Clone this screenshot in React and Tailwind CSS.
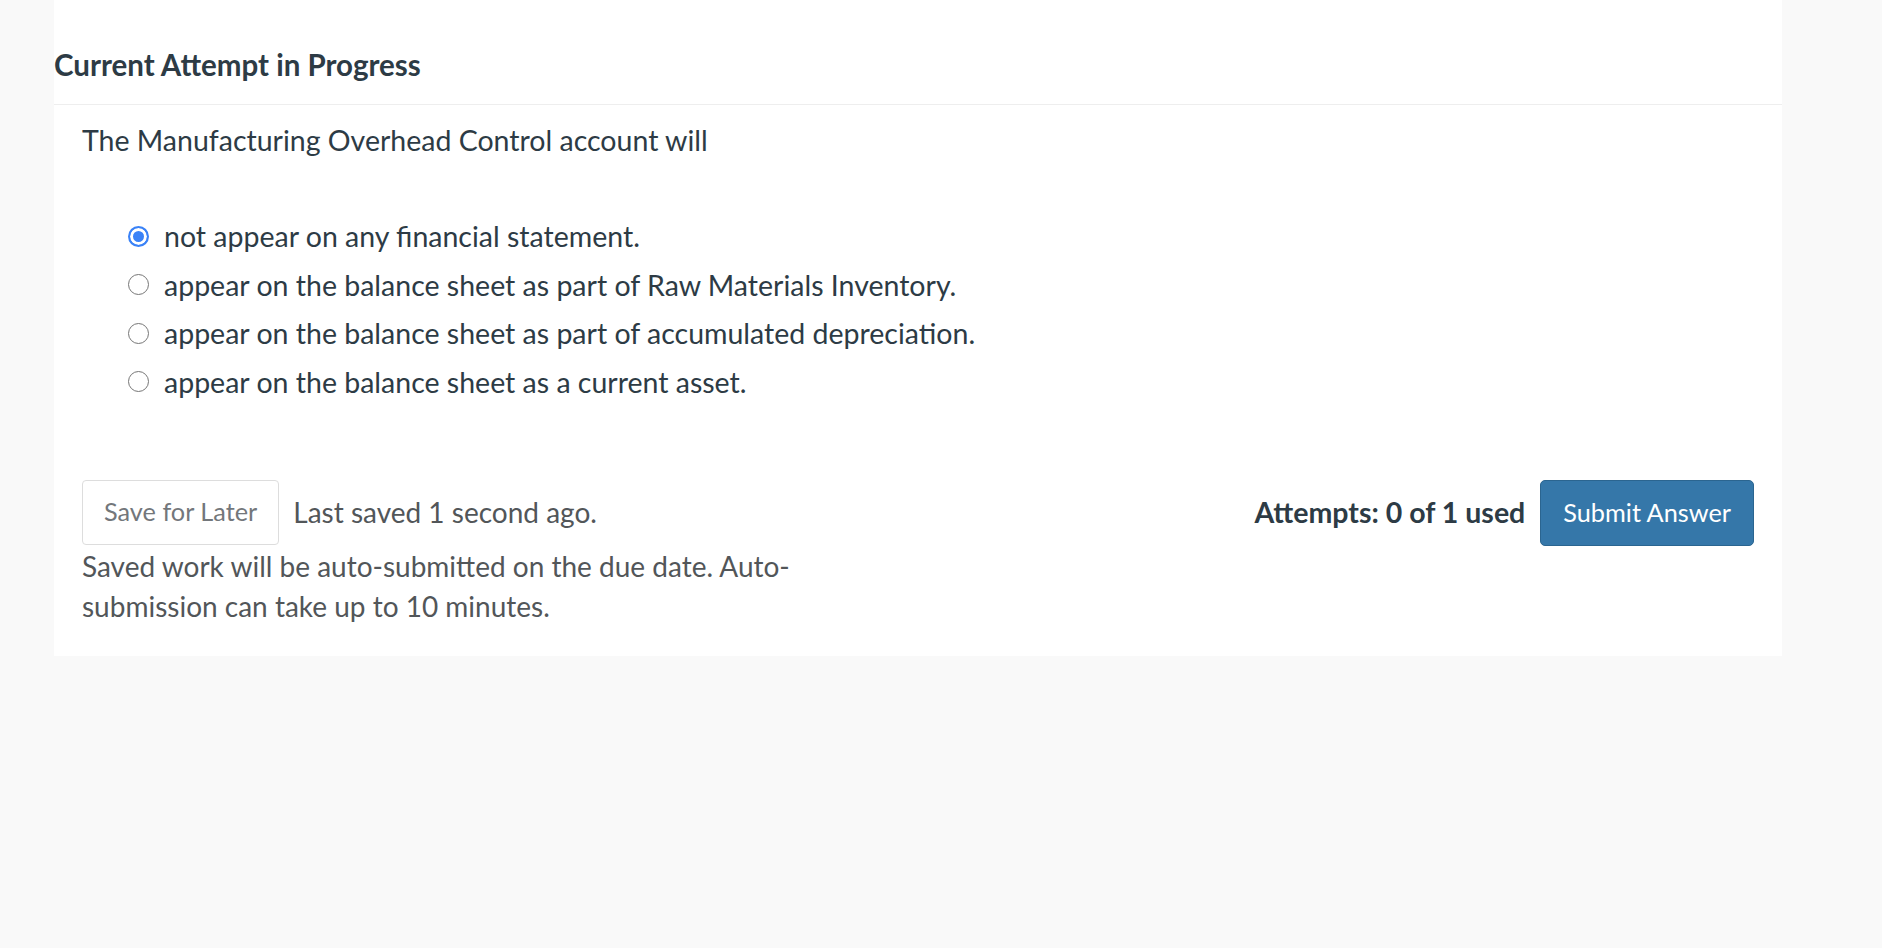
import { useState } from 'react';

const options = [
  'not appear on any financial statement.',
  'appear on the balance sheet as part of Raw Materials Inventory.',
  'appear on the balance sheet as part of accumulated depreciation.',
  'appear on the balance sheet as a current asset.',
];

export default function App() {
  const [picked, setPicked] = useState(0);

  return (
    <div className="min-h-[948px] bg-[#f9f9f9] pl-[54px] pr-[100px] text-[#2d3b45]" style={{ fontFamily: 'Lato, "Open Sans", sans-serif' }}>
      <div className="bg-white">
        <div className="h-[105px] pt-[46px] border-b border-[#eeeeee]">
          <h2 className="text-[29.5px] font-bold leading-[38px]">Current Attempt in Progress</h2>
        </div>

        <div className="px-[28px] pb-[30px]">
          <p className="text-[28.5px] leading-[38px] pt-[16px]">The Manufacturing Overhead Control account will</p>

          <div className="mt-[57px] pl-[46px] flex flex-col gap-[8.6px]">
            {options.map((o, i) => (
              <label key={i} className="flex items-center gap-[15px] text-[28.5px] leading-[40px] cursor-pointer">
                <input
                  type="radio"
                  name="answer"
                  checked={picked === i}
                  onChange={() => setPicked(i)}
                  className="appearance-none shrink-0 w-[21px] h-[21px] m-0 rounded-full border border-[#767676] bg-white checked:border-2 checked:border-[#3a82f7] checked:bg-[#3a82f7] checked:shadow-[inset_0_0_0_3px_white]"
                />
                <span>{o}</span>
              </label>
            ))}
          </div>

          <div className="mt-[78px] flex items-start justify-between">
            <div className="max-w-[760px]">
              <div className="flex items-center gap-[14px]">
                <button className="h-[65px] px-[21px] border border-[#dddddd] rounded-[4px] bg-white text-[25.3px] text-[#73777b]">Save for Later</button>
                <span className="text-[28px] text-[#525659]">Last saved 1 second ago.</span>
              </div>
              <p className="text-[28px] leading-[40px] text-[#525659] mt-[1px]">
                Saved work will be auto-submitted on the due date. Auto-submission can take up to 10 minutes.
              </p>
            </div>
            <div className="flex items-center gap-[15px]">
              <span className="text-[28.5px] font-bold">Attempts: 0 of 1 used</span>
              <button className="h-[66px] px-[22px] rounded-[5px] bg-[#3577a9] border border-[#2b6590] text-white text-[25.3px]">Submit Answer</button>
            </div>
          </div>
        </div>
      </div>
    </div>
  );
}
